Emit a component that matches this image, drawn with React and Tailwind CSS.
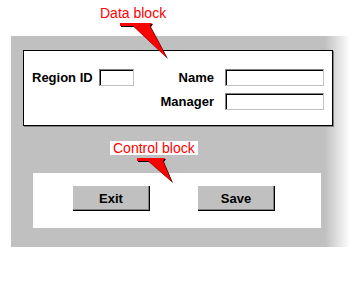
import React from 'react';

const Field = ({ className = '' }) => (
    <input
        type="text"
        className={`h-[17px] bg-white border border-t-[#808080] border-l-[#808080] border-r-[#c0c0c0] border-b-[#c0c0c0] shadow-[inset_1px_1px_0_#000] outline-none ${className}`}
    />
);

const Button = ({ children }) => (
    <button className="w-[77px] h-[25px] bg-[#c0c0c0] border-r border-b border-black shadow-[inset_-1px_-1px_0_#808080] text-[13px] font-bold text-black leading-none">
        {children}
    </button>
);

// red callout arrows, drawn in page coordinates
const Pointers = () => (
    <svg className="absolute inset-0 pointer-events-none" width="360" height="300" viewBox="0 0 360 300">
        <polygon points="121,24 153,24 151,27 168,59 134,27 121,27" fill="#000" />
        <polygon points="120,23 152,23 150,26 167,58 133,26 120,26" fill="#ff0000" />
        <polygon points="138,159 166,159 164,162 173,183 149,162 138,162" fill="#000" />
        <polygon points="137,158 165,158 163,161 172,182 148,161 137,161" fill="#ff0000" />
    </svg>
);

export default function App() {
    return (
        <div className="relative w-[360px] h-[300px] bg-white font-['Liberation_Sans',Arial,sans-serif] overflow-hidden">
            <div className="pl-[100px] pt-[5px] text-[14px] leading-[16px] text-[#ff0000]">Data block</div>

            <div className="ml-[11px] mt-[15px] w-[339px] h-[211px] bg-[linear-gradient(to_right,#c0c0c0_314px,#ffffff_339px)] pt-[14px] pl-[12px]">
                {/* data block */}
                <div className="w-[310px] h-[76px] bg-white border border-black shadow-[1px_1px_0_#808080] pt-[18px] pl-[8px] pr-[8px] flex items-start">
                    <div className="flex items-center gap-[6px]">
                        <span className="text-[13px] font-bold leading-[17px] text-black">Region ID</span>
                        <Field className="w-[35px]" />
                    </div>
                    <div className="ml-auto grid grid-cols-[53px_99px] gap-x-[11px] gap-y-[7px] items-center">
                        <span className="justify-self-end text-[13px] font-bold leading-[17px] text-black">Name</span>
                        <Field className="w-[99px]" />
                        <span className="justify-self-end text-[13px] font-bold leading-[17px] text-black whitespace-nowrap">Manager</span>
                        <Field className="w-[99px]" />
                    </div>
                </div>

                <div className="ml-[87px] mt-[15px] w-fit h-[14px] bg-white px-[3px] text-[14px] leading-[14px] text-[#ff0000]">Control block</div>

                {/* control block */}
                <div className="ml-[10px] mt-[18px] w-[288px] h-[55px] bg-white pt-[13px] pl-[40px] flex items-start gap-[48px]">
                    <Button>Exit</Button>
                    <Button>Save</Button>
                </div>
            </div>

            <Pointers />
        </div>
    );
}
